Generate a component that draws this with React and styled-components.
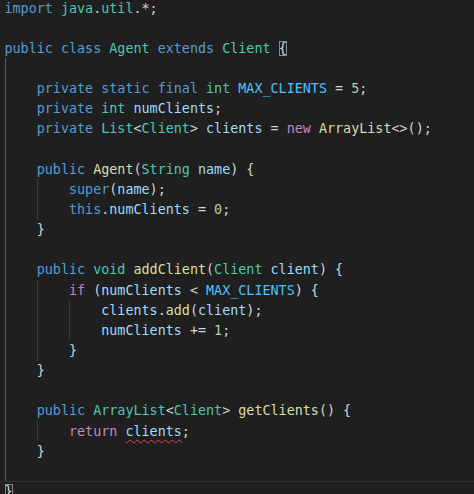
import React from 'react';
import styled, { createGlobalStyle } from 'styled-components';

const GlobalStyle = createGlobalStyle`
  html, body {
    margin: 0;
    padding: 0;
    background: #1f1f1f;
    overflow: hidden;
  }
`;

const Editor = styled.div`
  width: 474px;
  height: 494px;
  overflow: hidden;
  background: #1f1f1f;
  font-family: "DejaVu Sans Mono", "Liberation Mono", monospace;
  font-size: 13.4px;
  color: #d4d4d4;
`;

const Lines = styled.div`
  display: flex;
  flex-direction: column;
  margin-top: -2px;
  padding-left: 4.5px;
`;

const Line = styled.div`
  display: flex;
  align-items: center;
  height: 20.15px;
  white-space: pre;
  position: relative;
  box-shadow: ${p => (p.$current ? 'inset 0 1px 0 #303030' : 'none')};
  margin-left: ${p => (p.$current ? '-4.5px' : '0')};
  padding-left: ${p => (p.$current ? '4.5px' : '0')};
`;

const Guide = styled.span`
  display: inline-block;
  box-sizing: border-box;
  width: 4ch;
  height: 100%;
  flex: none;
  border-left: 1px solid ${p => (p.$active ? '#5c5c5c' : '#3a3a3a')};
`;

const colors = {
  kw: '#569cd6',
  type: '#4ec9b0',
  ctrl: '#c586c0',
  var: '#9cdcfe',
  const: '#4fc1ff',
  num: '#b5cea8',
  fn: '#dcdcaa',
  p: '#d4d4d4',
};

const Token = styled.span`
  color: ${p => colors[p.$kind]};
`;

const Squiggle = styled(Token)`
  text-decoration: underline wavy #f14c4c;
  text-decoration-thickness: 1px;
  text-underline-offset: 3px;
  text-decoration-skip-ink: none;
`;

const Bracket = styled.span`
  color: #d4d4d4;
  box-shadow: inset 0 0 0 1px #8a8a8a;
`;

const code = [
  { t: [['kw', 'import'], ['p', ' '], ['type', 'java'], ['p', '.'], ['type', 'util'], ['p', '.*;']] },
  { t: [] },
  { t: [['kw', 'public'], ['p', ' '], ['kw', 'class'], ['p', ' '], ['type', 'Agent'], ['p', ' '], ['kw', 'extends'], ['p', ' '], ['type', 'Client'], ['p', ' '], ['bracket', '{']] },
  { g: 1, t: [] },
  { g: 1, t: [['kw', 'private'], ['p', ' '], ['kw', 'static'], ['p', ' '], ['kw', 'final'], ['p', ' '], ['type', 'int'], ['p', ' '], ['const', 'MAX_CLIENTS'], ['p', ' = '], ['num', '5'], ['p', ';']] },
  { g: 1, t: [['kw', 'private'], ['p', ' '], ['type', 'int'], ['p', ' '], ['var', 'numClients'], ['p', ';']] },
  { g: 1, t: [['kw', 'private'], ['p', ' '], ['type', 'List'], ['p', '<'], ['type', 'Client'], ['p', '> '], ['var', 'clients'], ['p', ' = '], ['ctrl', 'new'], ['p', ' '], ['fn', 'ArrayList'], ['p', '<>();']] },
  { g: 1, t: [] },
  { g: 1, t: [['kw', 'public'], ['p', ' '], ['fn', 'Agent'], ['p', '('], ['type', 'String'], ['p', ' '], ['var', 'name'], ['p', ') {']] },
  { g: 2, t: [['kw', 'super'], ['p', '('], ['var', 'name'], ['p', ');']] },
  { g: 2, t: [['kw', 'this'], ['p', '.'], ['var', 'numClients'], ['p', ' = '], ['num', '0'], ['p', ';']] },
  { g: 1, t: [['p', '}']] },
  { g: 1, t: [] },
  { g: 1, t: [['kw', 'public'], ['p', ' '], ['type', 'void'], ['p', ' '], ['fn', 'addClient'], ['p', '('], ['type', 'Client'], ['p', ' '], ['var', 'client'], ['p', ') {']] },
  { g: 2, t: [['ctrl', 'if'], ['p', ' ('], ['var', 'numClients'], ['p', ' < '], ['const', 'MAX_CLIENTS'], ['p', ') {']] },
  { g: 3, t: [['var', 'clients'], ['p', '.'], ['fn', 'add'], ['p', '('], ['var', 'client'], ['p', ');']] },
  { g: 3, t: [['var', 'numClients'], ['p', ' += '], ['num', '1'], ['p', ';']] },
  { g: 2, t: [['p', '}']] },
  { g: 1, t: [['p', '}']] },
  { g: 1, t: [] },
  { g: 1, t: [['kw', 'public'], ['p', ' '], ['type', 'ArrayList'], ['p', '<'], ['type', 'Client'], ['p', '> '], ['fn', 'getClients'], ['p', '() {']] },
  { g: 2, t: [['ctrl', 'return'], ['p', ' '], ['squiggle', 'clients'], ['p', ';']] },
  { g: 1, t: [['p', '}']] },
  { g: 1, t: [] },
  { current: true, t: [['bracket', '}']] },
];

function renderToken([kind, text], i) {
  if (kind === 'bracket') return <Bracket key={i}>{text}</Bracket>;
  if (kind === 'squiggle') return <Squiggle key={i} $kind="var">{text}</Squiggle>;
  return <Token key={i} $kind={kind}>{text}</Token>;
}

export default function App() {
  return (
    <>
      <GlobalStyle />
      <Editor>
        <Lines>
          {code.map((line, n) => (
            <Line key={n} $current={line.current}>
              {Array.from({ length: line.g || 0 }, (_, i) => (
                <Guide key={i} $active={i === 0} />
              ))}
              {line.t.map(renderToken)}
            </Line>
          ))}
        </Lines>
      </Editor>
    </>
  );
}
